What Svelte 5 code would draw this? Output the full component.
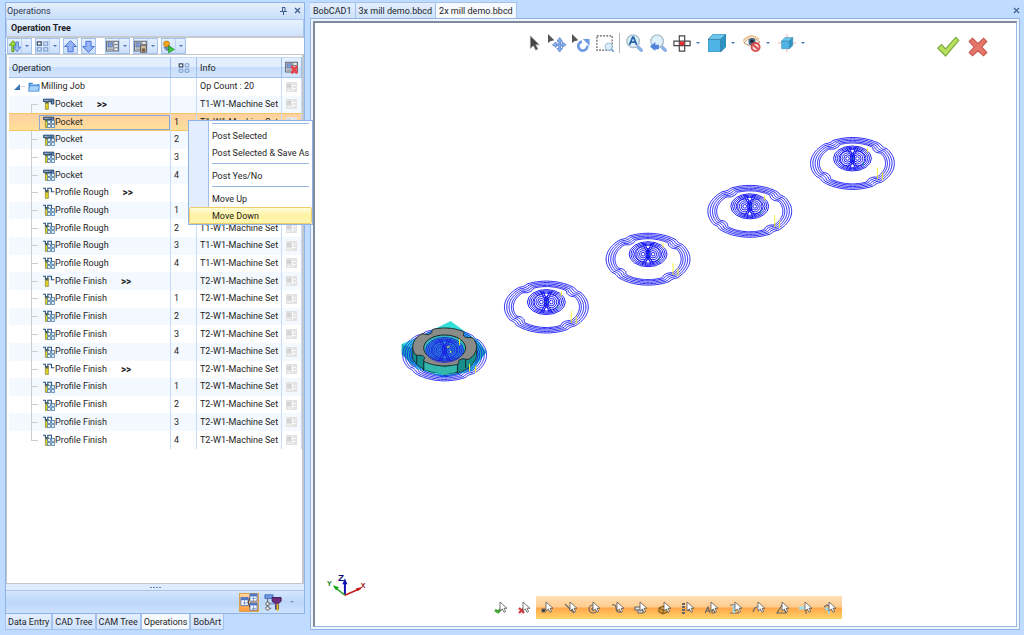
<script>
  const groups = [
    ['Pocket', 'T1-W1-Machine Set', 'pocket'],
    ['Profile Rough', 'T1-W1-Machine Set', 'profile'],
    ['Profile Finish', 'T2-W1-Machine Set', 'profile'],
    ['Profile Finish', 'T2-W1-Machine Set', 'profile']
  ];
  const rows = groups.flatMap(([name, info, kind]) =>
    [0, 1, 2, 3, 4].map((n) => ({ name, info, kind, n }))
  );
  let selected = $state(1);

  const treeTools = [
    { icon: 'sort', label: 'Sort', split: true },
    { icon: 'pattern', label: 'Pattern', split: true },
    { icon: 'up', label: 'Move up' },
    { icon: 'down', label: 'Move down' },
    { icon: 'post', label: 'Post', split: true, gap: true },
    { icon: 'postsave', label: 'Post and save', split: true },
    { icon: 'simulate', label: 'Simulate', split: true }
  ];
  const viewTools = [
    { icon: 'cursor', label: 'Select' },
    { icon: 'pan', label: 'Pan' },
    { icon: 'rotate', label: 'Rotate' },
    { icon: 'window', label: 'Zoom window', sep: true },
    { icon: 'zoomall', label: 'Zoom all' },
    { icon: 'zoomprev', label: 'Zoom previous' },
    { icon: 'planes', label: 'Planes', split: true },
    { icon: 'cube', label: 'Shading', split: true },
    { icon: 'eye', label: 'Visibility', split: true },
    { icon: 'cubeaxis', label: 'Work plane', split: true }
  ];
  const filters = ['point', 'line', 'circle', 'spline', 'surface', 'solid', 'group', 'text', 'dimension', 'curve', 'triangle', 'edge', 'chain'];
  const sideTabs = ['Data Entry', 'CAD Tree', 'CAM Tree', 'Operations', 'BobArt'];
  const docTabs = ['BobCAD1', '3x mill demo.bbcd', '2x mill demo.bbcd'];

  const notchAngles = [-124, -41, 53, 143];
  function contour(k, cx, cy, rx, ry, depth, spread) {
    let d = '';
    for (let a = 0; a < 360; a += 2) {
      let r = k;
      for (const n of notchAngles) {
        const diff = Math.abs(((a - n + 540) % 360) - 180);
        r -= depth * Math.exp(-Math.pow(diff / spread, 4));
      }
      const t = (a * Math.PI) / 180;
      d += (d ? 'L' : 'M') + (cx + rx * r * Math.cos(t)).toFixed(1) + ' ' + (cy + ry * r * Math.sin(t)).toFixed(1);
    }
    return d + 'Z';
  }
  const outer = [
    [1, 0.03, 5], [0.945, 0.04, 6], [0.89, 0.05, 7], [0.835, 0.06, 8], [0.79, 0.08, 9]
  ].map(([k, dep, s]) => contour(k, 0, 0, 42, 26, dep, s)).join('');
  const ringTop = contour(1, 444, 347, 32, 19, 0.17, 9);
  const parts = [[853, 163], [750, 211], [648, 259], [546, 307]];
</script>

{#snippet pointer(x, y)}
  <path transform="translate({x} {y})" d="M0 0V9L2.3 7L4 10.3L5.6 9.5L4 6.3H7Z" fill="#fff" stroke="#555" stroke-width=".8" />
{/snippet}

{#snippet ghostForm()}
  <svg width="11" height="10" viewBox="0 0 11 10" fill="none" aria-hidden="true"><path d="M0 0H11V10H0Z" fill="#e2e2e2" /><path d="M1 2H5V6H1Z" fill="#d4d4d4" /><path d="M6.500 1V9M7 3.500H10M7 6.500H10M1 8H5" stroke="#f8f8f8" /></svg>
{/snippet}

{#snippet icon(name, size)}
  <svg class="icon" width={size} height={size} viewBox="0 0 20 20" fill="none" aria-hidden="true">
    {#if name === 'sort'}
      <path d="M6 18V8H2L8 1L13 8H9V18Z" fill="#a5df35" stroke="#5d9a20" stroke-width="1.500" /><path d="M12 3H16V11H19.500L14 18L8.500 11H12Z" fill="#9cbdf5" stroke="#507bd0" stroke-width="1.500" />
    {:else if name === 'pattern'}
      <path d="M2 3H8V8H2Z" fill="#fff" stroke="#3d4f69" stroke-width="2" /><path d="M12 3H18V8H12ZM2 12H8V17H2ZM12 12H18V17H12Z" stroke="#7597ca" stroke-width="1.600" />
    {:else if name === 'up'}
      <path d="M6 18V10H1L10 1L19 10H14V18Z" fill="#96b4f5" stroke="#4a72d4" stroke-width="1.500" />
    {:else if name === 'down'}
      <path d="M6 2V10H1L10 19L19 10H14V2Z" fill="#96b4f5" stroke="#4a72d4" stroke-width="1.500" />
    {:else if name === 'post' || name === 'postsave' || name === 'postoff'}
      <path d="M1 2H19V17H1Z" fill="#ececec" stroke="#5b6675" stroke-width="1.700" /><path d="M3 4H10V11H3Z" fill="#7f9bd8" stroke="#5c6c89" /><path d="M12 2V17M13 7H18M13 12H18M3 14H11" stroke="#69717e" stroke-width="1.500" />
      {#if name === 'postsave'}<path d="M10 8H19V19H10Z" fill="#c9b999" stroke="#555" stroke-width="1.300" /><path d="M12 13H17V18H12Z" fill="#775f45" />{/if}
      {#if name === 'postoff'}<path d="M10 8L19 19M19 8L10 19" stroke="#e8444a" stroke-width="4.500" />{/if}
    {:else if name === 'simulate'}
      <path d="M2 11L12 8L16 14L7 17Z" fill="#6b87aa" /><circle cx="7" cy="6" r="4.500" fill="#f4a51c" stroke="#a66f12" /><path d="M10 9L19 14.500L10 20Z" fill="#3fc93f" stroke="#16851d" />
    {:else if name === 'folder'}
      <path d="M1 17V3H7L9 5H19V17Z" fill="#3e8ade" /><path d="M3 8H19L17 17H1Z" fill="#a4d2fb" stroke="#4385cd" /><path d="M4 6H16" stroke="#fff" />
    {:else if name === 'pocket' || name === 'profile'}
      {#if name === 'pocket'}
        <path d="M1 2H18V10H14V6H1Z" fill="#8da7c4" stroke="#193f70" stroke-width="1.600" /><path d="M8 5H17M14 3V9" stroke="#193f70" />
      {:else}
        <path d="M0 2H4V6H8V2H14V8H19" stroke="#26507f" stroke-width="1.800" />
      {/if}
      <path d="M4 6H9V19H4Z" fill="#e0d327" stroke="#6f6a29" /><path d="M4 5H9V9H4Z" fill="#4a5c62" />
    {:else if name === 'cursor'}
      <path d="M7 2V16L10.500 13L13 18L15.500 16.800L13 12H17Z" fill="#444" stroke="#aaa" stroke-width=".7" />
    {:else if name === 'pan' || name === 'rotate'}
      <path d="M0 0V10L2.500 8L7 7Z" fill="#555" />
      {#if name === 'pan'}
        <path d="M13 4L16 8H14V11H16V9L20 12L16 15V13H14V16H16L13 20L10 16H12V13H9V15L5 12L9 9V11H12V8H10Z" fill="#8ab3f0" stroke="#3b68bd" stroke-width=".7" />
      {:else}
        <path d="M17 13A5 5 0 1 1 11 8.500" stroke="#6b99e6" stroke-width="3" /><path d="M12 5.500H19.500V13Z" fill="#6b99e6" />
      {/if}
    {:else if name === 'window'}
      <path d="M1 2H18V18H1Z" stroke="#555" stroke-width="1.300" stroke-dasharray="2 1.500" /><path d="M16 16L20 20" stroke="#79a6dc" stroke-width="2" /><circle cx="14" cy="14" r="4" fill="#dceefb" stroke="#94b9d2" />
    {:else if name === 'zoomall' || name === 'zoomprev'}
      <path d="M14 14L18 18" stroke="#8db3e6" stroke-width="4" stroke-linecap="round" /><circle cx="9" cy="8" r="7" fill="#dff0fa" stroke="#a9bfcc" stroke-width="1.500" />
      {#if name === 'zoomall'}<path d="M5 12L8.500 3.500H9.500L13 12M6.500 9H11.500" stroke="#2865ac" stroke-width="2" />{:else}<path d="M1 14L7 9V12H11V17H7V19Z" fill="#4e83d9" />{/if}
    {:else if name === 'planes'}
      <path d="M7 2H13V19H7ZM1 8H19V13H1ZM7 8V13M13 8V13" fill="#fff" stroke="#444" stroke-width="1.300" /><path d="M7.500 8.500H12.500V12.500H7.500Z" fill="#ee2d35" />
    {:else if name === 'cube' || name === 'cubeaxis'}
      {#if name === 'cubeaxis'}<path d="M10 0V20M0 10H20" stroke="#f5a7a7" />{/if}
      <g transform={name === 'cubeaxis' ? 'translate(4 4) scale(.62)' : ''}>
        <path d="M0 6H14V20H0Z" fill="#4cb5e5" stroke="#3a86ab" /><path d="M0 6L6 0H20L14 6Z" fill="#6cc8ef" stroke="#3a86ab" /><path d="M14 6L20 0V14L14 20Z" fill="#2b94c4" stroke="#3a86ab" />
      </g>
    {:else if name === 'eye'}
      <path d="M1 10Q9 0 19 9Q10 16 1 10Z" fill="#fff" stroke="#b58a5b" /><path d="M0 8Q8 -2 18 6" stroke="#ecc08f" stroke-width="2" /><circle cx="10" cy="8.500" r="4" fill="#456887" /><circle cx="10" cy="8" r="1.800" fill="#182531" /><circle cx="14" cy="14.500" r="4.500" fill="#f9d3cf" stroke="#d4484b" stroke-width="2" /><path d="M11 12L17 17" stroke="#d4484b" stroke-width="2" />
    {:else if name === 'accept'}
      <path d="M1.500 11L4.500 8L8 11.500L16.500 2L19 4.500L8 17.500Z" fill="#b9e05c" stroke="#7cac41" />
    {:else if name === 'reject'}
      <path d="M2 5L5 2L10 7L15 2L18 5L13.500 10L18 15L15 18L10 13.500L5 18L2 15L6.500 10Z" fill="#e4776a" stroke="#c4544c" />
    {:else if name === 'layoutA'}
      <path d="M1 5H9V14H1ZM11 1H19V9H11ZM11 11H19V19H11Z" fill="#fff" stroke="#5a77b2" /><path d="M1 5H9V8H1ZM11 1H19V4H11ZM11 11H19V14H11Z" fill="#4e78c7" /><path d="M3 11H8M13 6H18M13 17H18M5 8V14M15 4V9M15 14V19" stroke="#7693cb" /><path d="M9 10L11 5M9 10L11 16" stroke="#333" />
    {:else if name === 'layoutB'}
      <path d="M1 2H10V6H1Z" fill="#6f9ae4" stroke="#416cb9" /><path d="M4 6V17H8M4 12H8" stroke="#555" /><circle cx="4" cy="12" r="2" fill="#eee" stroke="#555" /><circle cx="4" cy="17" r="2" fill="#eee" stroke="#555" /><path d="M8 10H12V13H8Z" fill="#81a5df" /><path d="M9 5H19V9L16 12V18H13V12L9 9Z" fill="#6b2c82" stroke="#421452" /><path d="M14 12H16V20H14Z" fill="#dfcd22" />
    {/if}
  </svg>
{/snippet}

{#snippet miniPattern()}
  <svg class="mini" width="8" height="8" viewBox="0 0 8 8" aria-hidden="true"><path d="M.5 .5H3.500V3.500H.5ZM4.500 .5H7.500V3.500H4.500ZM.5 4.500H3.500V7.500H.5ZM4.500 4.500H7.500V7.500H4.500Z" fill="#e3f0f8" stroke="#4f7ca7" stroke-width=".8" /></svg>
{/snippet}

{#snippet filterIcon(name)}
  <svg class="icon" width="14" height="14" viewBox="0 0 14 14" fill="none" stroke="#666" stroke-width="1.100" aria-hidden="true">
    {#if name === 'yes'}<path d="M1 9L4 11L8 7" stroke="#45a735" stroke-width="2.800" />
    {:else if name === 'no'}<path d="M2 7L7 12M7 7L2 12" stroke="#d33a3e" stroke-width="2.200" />
    {:else if name === 'point'}<path d="M2 8H5V11H2Z" fill="#333" />
    {:else if name === 'line'}<path d="M1 3L10 12" />
    {:else if name === 'circle'}<circle cx="6" cy="8" r="4" /><path d="M6 6V10M4 8H8" />
    {:else if name === 'spline'}<path d="M1 4Q5 3 5 7Q5 12 10 11" />
    {:else if name === 'surface'}<path d="M1 6H9V9H1ZM4 9H9V12H4Z" fill="#ddd" />
    {:else if name === 'solid'}<path d="M1 7L5 5L10 7V11L5 13L1 11ZM1 7L5 9L10 7M5 9V13" fill="#dc982b" stroke="#7a5a26" />
    {:else if name === 'group'}<path d="M1 3H4M1 6H4M1 9H4M6 6H9M6 9H9M1 12H4" stroke-width="2" />
    {:else if name === 'text'}<path d="M0 12L3 6L5 12M1 10H5M7 7V12H9Q11 11 9 9H7" />
    {:else if name === 'dimension'}<path d="M1 4H8M1 12H10" /><path d="M5 4V12" stroke="#9ed8ee" stroke-width="2.500" />
    {:else if name === 'curve'}<path d="M1 11Q3 4 7 7T11 11" /><path d="M5 6L9 11" stroke="#bde9f3" />
    {:else if name === 'triangle'}<path d="M1 12H10L6 4Z" /><path d="M6 9L9 6" stroke="#95d7ed" stroke-width="2" />
    {:else if name === 'edge'}<path d="M0 7H6" stroke="#a4deef" stroke-width="3" /><path d="M7 7V13" />
    {:else}<path d="M1 6L4 4L8 7" /><path d="M2 7L6 9V13" stroke="#9cd8e8" stroke-width="2" />{/if}
    {@render pointer(6, 1)}
  </svg>
{/snippet}

<div class="app">
  <aside class="side">
    <section class="dock">
      <header class="title">
        <span>Operations</span>
        <button class="plain" aria-label="Pin"><svg width="7" height="8" viewBox="0 0 7 8" fill="none" stroke="#3c5d91"><path d="M2 .5H5V4.500M2.500 .5V4.500M0 4.500H7M3.500 5V8" /></svg></button>
        <button class="plain" aria-label="Close panel"><svg width="7" height="7" viewBox="0 0 7 7" stroke="#3c5d91" stroke-width="1.200"><path d="M1 1L6 6M6 1L1 6" /></svg></button>
      </header>
      <h1>Operation Tree</h1>
      <div class="tree-tools">
        {#each treeTools as t}
          <div class="tool" class:spaced={t.gap}>
            <button aria-label={t.label}>{@render icon(t.icon, 13)}</button>
            {#if t.split}<button class="drop" aria-label="{t.label} options"><i class="tri"></i></button>{/if}
          </div>
        {/each}
      </div>
      <div class="tree">
        <table>
          <colgroup><col /><col class="c-num" /><col class="c-info" /><col class="c-post" /></colgroup>
          <thead>
            <tr><th>Operation</th><th aria-label="Pattern" class="mid">{@render icon('pattern', 12)}</th><th>Info</th><th aria-label="Post" class="mid">{@render icon('postoff', 13)}</th></tr>
          </thead>
          <tbody>
            <tr>
              <td><div class="root"><svg width="7" height="6" viewBox="0 0 7 6"><path d="M0 6H6V0Z" fill="#3c78b8" /></svg><i class="stub"></i>{@render icon('folder', 12)}<span>Milling Job</span></div></td>
              <td></td><td>Op Count : 20</td><td class="mid">{@render ghostForm()}</td>
            </tr>
            {#each rows as r, i}
              <tr class:alt={i % 2 === 0} class:sel={i === selected} onclick={() => (selected = i)}>
                <td class="branch" class:first={i === 0} class:last={i === rows.length - 1}>
                  <div class="op">
                    <span class="opicon">{@render icon(r.kind, 12)}{#if r.n}{@render miniPattern()}{/if}</span>
                    <span>{r.name}</span>{#if !r.n}<b>&gt;&gt;</b>{/if}
                  </div>
                </td>
                <td>{r.n || ''}</td><td>{r.info}</td>
                <td class="mid">{@render ghostForm()}</td>
              </tr>
            {/each}
          </tbody>
        </table>
        <div class="menu" role="menu">
          <hr />
          <button role="menuitem">Post Selected</button>
          <button role="menuitem">Post Selected &amp; Save As</button>
          <hr />
          <button role="menuitem">Post Yes/No</button>
          <hr />
          <button role="menuitem">Move Up</button>
          <button role="menuitem" class="hot">Move Down</button>
        </div>
      </div>
      <div class="splitter"><i></i><i></i><i></i><i></i></div>
      <footer class="modes">
        <button class="on" aria-label="Tree view">{@render icon('layoutA', 18)}</button>
        <button aria-label="Tool view">{@render icon('layoutB', 18)}</button>
        <button class="drop" aria-label="More views"><i class="tri grey"></i></button>
      </footer>
    </section>
    <nav class="side-tabs">
      {#each sideTabs as t}<button class:active={t === 'Operations'}>{t}</button>{/each}
    </nav>
  </aside>

  <main>
    <nav class="doc-tabs">
      {#each docTabs as t, i}<button class:active={i === 2}>{t}</button>{/each}
      <button class="plain close" aria-label="Close document"><svg width="7" height="7" viewBox="0 0 7 7" stroke="#3c5d91" stroke-width="1.200"><path d="M1 1L6 6M6 1L1 6" /></svg></button>
    </nav>
    <div class="frame">
      <div class="view">
        <svg class="scene" viewBox="314 23 703 603" fill="none" role="img" aria-label="Toolpaths">
          <defs>
            <g id="pocket">
              {#each [19, 17.200, 15.400, 13.600] as r}<ellipse rx={r} ry={r * 0.66} />{/each}
              {#each [-5, 5] as x}{#each [2, 4, 6, 8] as r}<ellipse cx={x} rx={r * 0.9} ry={r * 0.92} />{/each}{/each}
              <path d="M-6 -11L0 0L6 -11M-6 11L0 0L6 11M-3 -11L0 -2L3 -11M-3 11L0 2L3 11" />
            </g>
          </defs>
          <g stroke="#0808f4" stroke-width=".9">
            {#each parts as [x, y]}
              <g transform="translate({x} {y})">
                <path d={outer} /><use href="#pocket" x="0" y="-5" />
                <path d="M15 -16V-11M25 4V16M30 9V17" stroke="#f5ee23" /><path d="M1 -6V-4M11 -1V2" stroke="#079a7c" />
              </g>
            {/each}
          </g>
          <path d="M450 321L479 342L486 352L472 371L444 378L416 369L401 354V344L420 336Z" fill="#35dfd8" />
          <path d="M401 344L416 350L412 366L401 354ZM474 340L486 352L474 365Z" fill="#1aaeb5" />
          <g stroke="#1414f0" stroke-width=".9" transform="translate(444 355)"><path d={outer} /></g>
          <path d="M412 347V359Q417 368 430 372L446 374L461 372Q474 366 476 356V347Z" fill="#168f8d" stroke="#194044" />
          <path d="M423 361V371M444 366V376M457 363V373M465 360V368M416 355V364" stroke="#172d32" /><path d="M424 362L444 367L456 364V372L444 375L424 370Z" fill="#33b8ae" />
          <path d={ringTop} fill="#8a8c88" stroke="#182529" />
          <ellipse cx="444" cy="348" rx="21" ry="13" fill="#31b9b5" stroke="#182529" />
          <ellipse cx="444" cy="350" rx="19" ry="11" fill="#2f86dc" />
          <use href="#pocket" x="444" y="350" stroke="#1717e0" stroke-width=".8" />
          <path d="M459 339V345M469 364V372M475 366V373M446 347H449M450 351V353" stroke="#f5ee23" />
          <g class="axis" stroke-width="1.500">
            <path d="M344 595V583" stroke="#1111b6" stroke-width="2" /><path d="M341.500 585L344 579L346.500 585Z" fill="#1111b6" /><path d="M344 596L334 588" stroke="#11a011" /><path d="M332 586L338 588L335 591Z" fill="#11a011" /><path d="M344 596L360 589" stroke="#c51818" /><path d="M361 588L355 589L357 592Z" fill="#c51818" />
            <text x="337" y="582" font-size="10" fill="#0c0c78">Z</text><text x="326" y="587" font-size="7" fill="#0b7c18">Y</text><text x="360" y="589" font-size="7" fill="#991515">X</text>
          </g>
        </svg>
        <div class="view-tools">
          {#each viewTools as t}
            <button aria-label={t.label}>{@render icon(t.icon, 18)}</button>
            {#if t.split}<button class="drop" aria-label="{t.label} options"><i class="tri"></i></button>{/if}
            {#if t.sep}<i class="sep"></i>{/if}
          {/each}
        </div>
        <div class="confirm">
          <button aria-label="Accept">{@render icon('accept', 24)}</button>
          <button aria-label="Cancel">{@render icon('reject', 22)}</button>
        </div>
        <div class="filters">
          <button aria-label="Select all">{@render filterIcon('yes')}</button>
          <button aria-label="Select none">{@render filterIcon('no')}</button>
          <div class="filter-set">
            {#each filters as f}<button aria-label="Filter {f}">{@render filterIcon(f)}</button>{/each}
          </div>
        </div>
      </div>
    </div>
  </main>
</div>

<style>
  :global(body) { margin: 0; }
  .app { display: flex; gap: 5px; height: 100vh; box-sizing: border-box; padding: 2px 4px 5px 5px; background: #bfdbff; color: #1e1e1e; font: 9px/12px Roboto, "Noto Sans", sans-serif; overflow: hidden; }
  .app * { box-sizing: border-box; }
  button { display: flex; align-items: center; justify-content: center; margin: 0; padding: 0; border: 0; background: none; font: inherit; color: inherit; white-space: nowrap; }
  .icon { display: block; flex: none; }
  .tri { border: 2px solid transparent; border-top-color: #4774b7; border-bottom: 0; }
  .grey { border-top-color: #8b98aa; }

  .side { display: flex; flex-direction: column; flex: none; width: 300px; position: relative; z-index: 2; }
  .dock { display: flex; flex-direction: column; flex: 1; min-height: 0; border: 1px solid #8fb3e4; background: #fff; }
  .title { display: flex; align-items: center; gap: 7px; height: 16px; padding: 0 3px 1px 1px; background: linear-gradient(#e5effc, #c9def9); color: #2a3952; }
  .title span { flex: 1; }
  h1 { margin: 0; height: 19px; padding: 0 4px; border: 1px solid #abc8ee; border-bottom: 2px solid #c6c9ce; background: linear-gradient(#e8f2ff, #cfe2fc); font-size: 9px; line-height: 16px; }
  .tree-tools { display: flex; gap: 3px; height: 16px; padding-left: 1px; }
  .tool { display: flex; border: 1px solid #a3c2ec; background: linear-gradient(#e5f0ff, #cbdffb); }
  .tool button { width: 13px; }
  .tool .drop { width: 10px; border-left: 1px solid #bcd4f4; }
  .spaced { margin-left: 6px; }

  .tree { flex: 1; min-height: 0; position: relative; padding: 2px 0 0 2px; border: 1px solid #c3c7cd; border-right-width: 2px; }
  table { width: 100%; height: 392px; border-collapse: separate; border-spacing: 0; table-layout: fixed; }
  .c-num { width: 26px; } .c-info { width: 85px; } .c-post { width: 20px; }
  thead tr { height: 21px; }
  th { padding: 0 3px; border-right: 1px solid #9fc0ea; border-bottom: 1px solid #9fc0ea; border-top: 1px solid #c6dbf6; background: linear-gradient(#e3efff 45%, #c7ddf9 50%, #d4e6fd); font-weight: 400; text-align: left; }
  td { padding: 0 0 0 3px; border-right: 1px solid #c6dcf8; line-height: 17px; white-space: nowrap; }
  .mid { padding: 0; } .mid :global(svg) { display: block; margin: 0 auto; }
  .alt td { background-color: #f3f9fe; }
  .root { display: flex; align-items: center; margin-left: 2px; }
  .stub { width: 4px; height: 1px; margin-right: 3px; background: #ccc; }
  .root span { margin-left: 1px; }
  .branch { padding: 0; background-image: linear-gradient(#cdcdcd, #cdcdcd), linear-gradient(#cdcdcd, #cdcdcd); background-repeat: no-repeat; background-size: 1px 100%, 7px 1px; background-position: 22px 0, 22px 50%; }
  .first { background-size: 1px 50%, 7px 1px; background-position: 22px 100%, 22px 50%; }
  .last { background-size: 1px 50%, 7px 1px; }
  .op { display: flex; align-items: center; margin-left: 30px; padding-left: 3px; border: 1px solid transparent; line-height: 15px; }
  .op b { margin-left: 14px; font-size: 10px; }
  .opicon { position: relative; width: 12px; }
  .opicon .mini { position: absolute; right: 0; bottom: 0; }
  .sel td { border-top: 1px solid #f3c667; border-bottom: 1px solid #f3c667; background-color: #ffd694; background-image: linear-gradient(#ffd0a0, #ffe09a); background-size: auto; background-position: 0 0; line-height: 15px; }
  .sel .op { border-color: #8ca9d4; line-height: 13px; }

  .menu { position: absolute; left: 181px; top: 65px; width: 125px; border: 1px solid #8fb3e4; background: linear-gradient(90deg, #e2eeff 19px, #9fbfe9 19px 20px, #fff 20px); }
  .menu hr { margin: 2px 3px 3px 23px; border: 0; height: 1px; background: #98b8e2; }
  .menu button { width: 100%; height: 17px; padding-left: 23px; justify-content: flex-start; }
  .menu .hot { border: 1px solid #f0cf69; padding-left: 22px; border-radius: 2px; background: linear-gradient(#fffbd8, #fff2a4 50%, #fff7b0); }

  .splitter { display: flex; align-items: center; justify-content: center; gap: 1px; height: 7px; background: #dfecfd; border-bottom: 1px solid #a9c5ec; }
  .splitter i { width: 2px; height: 1px; background: #6685b2; }
  .modes { display: flex; align-items: center; justify-content: flex-end; gap: 4px; height: 22px; padding-right: 7px; background: linear-gradient(#d5e6fc, #bcd7fb 50%, #cde2ff); }
  .modes .on { border: 1px solid #d6a451; background: linear-gradient(#ffd49c, #ff9c37); }
  .modes button { width: 20px; height: 19px; } .modes .drop { width: 10px; }
  .side-tabs { display: flex; flex: none; height: 16px; }
  .side-tabs button, .doc-tabs button { padding: 0 3px; border: 1px solid #a3c2ec; border-top: 0; background: linear-gradient(#e4effe, #cfe2fd); }
  .side-tabs button { padding: 0 2px; }
  .side-tabs .active, .doc-tabs .active { background: #f6faff; }

  main { display: flex; flex-direction: column; flex: 1; min-width: 0; }
  .doc-tabs { display: flex; height: 16px; flex: none; }
  .doc-tabs button { border-top: 1px solid #a3c2ec; border-bottom: 0; border-left: 0; }
  .doc-tabs .close { margin-left: auto; padding: 0; border: 0; background: none; }
  .frame { display: flex; flex: 1; min-height: 0; padding: 2px; border: 1px solid #94b5e1; background: #eef5ff; }
  .view { position: relative; flex: 1; min-width: 0; border: 1px solid #9bb9df; border-top: 2px solid #7f8b9c; border-left: 2px solid #7f8b9c; background: #fff; }
  .scene { display: block; width: 100%; height: 100%; }
  .axis text { font-family: "Liberation Sans", sans-serif; font-weight: 700; stroke: none; }
  .view-tools { position: absolute; top: 10px; left: 0; right: 0; display: flex; justify-content: center; gap: 4px; height: 20px; }
  .view-tools button { width: 20px; }
  .view-tools .drop { width: 11px; margin-left: -4px; }
  .sep { width: 1px; background: #b5b5b5; }
  .confirm { position: absolute; top: 12px; right: 27px; display: flex; align-items: center; gap: 7px; }
  .filters { position: absolute; left: 0; right: 0; bottom: 7px; display: flex; justify-content: center; height: 23px; }
  .filters > button { width: 23px; }
  .filter-set { display: grid; grid-template-columns: repeat(13, 1fr); width: 306px; background: linear-gradient(#ffe0b4, #ffcb8e 48%, #ffa64b 52%, #ffd468); }
</style>
